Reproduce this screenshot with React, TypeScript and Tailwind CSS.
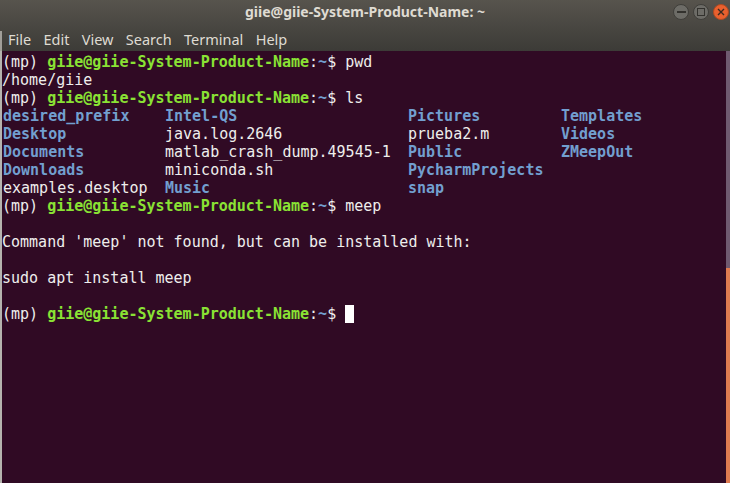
import React from "react";

const P = () => (
  <>
    <span>(mp) </span>
    <span className="font-bold text-[#8ae234]">giie@giie-System-Product-Name</span>
    <span>:</span>
    <span className="font-bold text-[#729fcf]">~</span>
    <span>$ </span>
  </>
);

const D = ({ c }: { c: string }) => <span className="font-bold text-[#729fcf]">{c}</span>;

const rows: [React.ReactNode, React.ReactNode, React.ReactNode, React.ReactNode][] = [
  [<D c="desired_prefix" />, <D c="Intel-QS" />, <D c="Pictures" />, <D c="Templates" />],
  [<D c="Desktop" />, "java.log.2646", "prueba2.m", <D c="Videos" />],
  [<D c="Documents" />, "matlab_crash_dump.49545-1", <D c="Public" />, <D c="ZMeepOut" />],
  [<D c="Downloads" />, "miniconda.sh", <D c="PycharmProjects" />, ""],
  ["examples.desktop", <D c="Music" />, <D c="snap" />, ""],
];

export default function App() {
  return (
    <div className="w-[730px] h-[483px] flex flex-col overflow-hidden bg-[#300a24] font-['Noto_Sans',sans-serif]">
      <div className="h-[51px] shrink-0 flex flex-col bg-gradient-to-b from-[#57544d] to-[#3c3b37]">
        <div className="h-[31px] shrink-0 relative flex justify-center">
          <span className="font-bold text-[14px] leading-[24px] text-[#dfdbd2]">giie@giie-System-Product-Name: ~</span>
          <div className="absolute right-[1px] top-[4px] flex gap-[4px]">
            <div className="w-[16px] h-[16px] rounded-full bg-[#6d6c67] border border-[#3f3e3a] flex items-center justify-center">
              <div className="w-[9px] h-[1.5px] bg-[#33322e]" />
            </div>
            <div className="w-[16px] h-[16px] rounded-full bg-[#6d6c67] border border-[#3f3e3a] flex items-center justify-center">
              <div className="w-[8px] h-[8px] border border-[#33322e]" />
            </div>
            <div className="w-[16px] h-[16px] rounded-full bg-[#e9602e] border border-[#b04a22] flex items-center justify-center">
              <svg width="8" height="8" viewBox="0 0 8 8"><path d="M1 1 7 7M7 1 1 7" stroke="#3c2a20" strokeWidth="1.4" /></svg>
            </div>
          </div>
        </div>
        <div className="h-[20px] shrink-0 flex items-start gap-[12.3px] pl-[6px] border-l-2 border-[#a09e99] text-[14.5px] leading-[16px] text-[#dfdbd2]">
          <span>File</span><span>Edit</span><span>View</span><span>Search</span><span>Terminal</span><span>Help</span>
        </div>
      </div>
      <div className="flex-1 flex min-h-0">
        <div className="w-[2px] shrink-0 bg-[#b5b3ae]" />
        <div className="flex-1 pt-[2px] font-['DejaVu_Sans_Mono',monospace] text-[15px] leading-[18px] text-[#eeeeec] whitespace-pre">
          <div><P />pwd</div>
          <div>/home/giie</div>
          <div><P />ls</div>
          {rows.map((r, i) => (
            <div key={i} className="grid grid-cols-[162px_243px_153px_1fr] h-[18px] pl-[1px]">
              {r.map((c, j) => <div key={j}>{c}</div>)}
            </div>
          ))}
          <div><P />meep</div>
          <div className="h-[18px]" />
          <div>Command 'meep' not found, but can be installed with:</div>
          <div className="h-[18px]" />
          <div>sudo apt install meep</div>
          <div className="h-[18px]" />
          <div className="flex items-center"><span><P /></span><span className="w-[9px] h-[18px] bg-white" /></div>
        </div>
        <div className="w-[4px] shrink-0 flex flex-col">
          <div className="h-[217px] bg-[#6f5a70]" />
          <div className="flex-1 bg-[#df7b50]" />
        </div>
      </div>
    </div>
  );
}
